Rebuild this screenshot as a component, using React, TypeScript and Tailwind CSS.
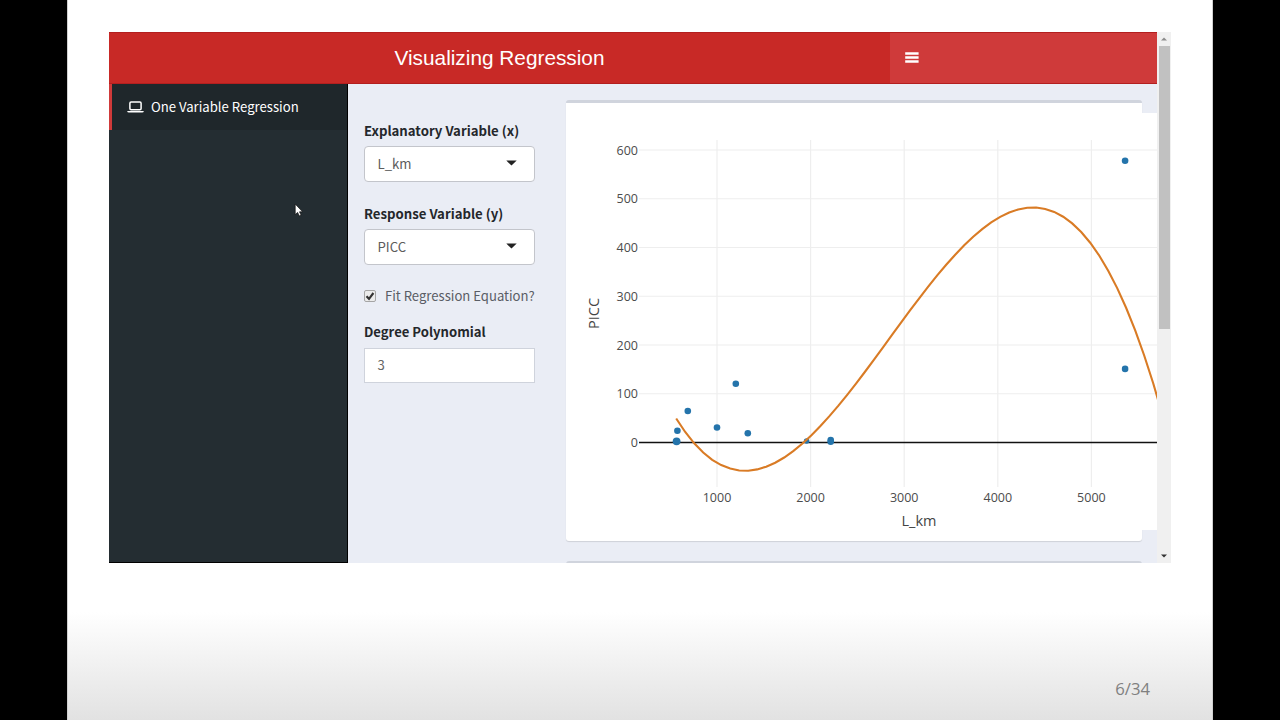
import React, { useState } from "react";

interface Point {
  x: number;
  y: number;
  r?: number;
}

const points: Point[] = [
  { x: 676.6, y: 441.3, r: 3.9 },
  { x: 677.4, y: 430.8 },
  { x: 687.8, y: 411 },
  { x: 717, y: 427.5 },
  { x: 735.8, y: 383.8 },
  { x: 747.8, y: 433.2 },
  { x: 806.6, y: 441, r: 2.8 },
  { x: 830.7, y: 440 },
  { x: 830.7, y: 441.8 },
  { x: 1125.1, y: 160.7 },
  { x: 1125.1, y: 368.9 },
];

const xTicks = [1000, 2000, 3000, 4000, 5000];
const yTicks = [0, 100, 200, 300, 400, 500, 600];

const scaleX = (v: number) => 717 + (v - 1000) * 0.0936;
const scaleY = (v: number) => 442.5 - v * 0.4875;

// degree 3 fit, between its two turning points t goes from 0 to 1
const fitPath = () => {
  const list: string[] = [];
  for (let i = 0; i <= 54; i++) {
    const x = 676.2 + i * 9;
    const t = (x - 745) / 288;
    const y = 470.8 - 263.4 * (3 * t * t - 2 * t * t * t);
    list.push(`${x.toFixed(1)},${y.toFixed(1)}`);
  }
  return "M" + list.join("L");
};

function Plot() {
  return (
    <svg
      className="block flex-none bg-white font-['Open_Sans',sans-serif]"
      width="592"
      height="417"
      viewBox="566 113 592 417"
    >
      {xTicks.map((v) => (
        <line key={v} x1={scaleX(v)} x2={scaleX(v)} y1="140" y2="487" stroke="#eeeeee" strokeWidth="1.2" />
      ))}
      {yTicks.slice(1).map((v) => (
        <line key={v} x1="639" x2="1158" y1={scaleY(v)} y2={scaleY(v)} stroke="#eeeeee" strokeWidth="1.2" />
      ))}
      <line x1="639" x2="1158" y1="442.5" y2="442.5" stroke="#111" strokeWidth="1.3" />
      {points.map((p, i) => (
        <circle key={i} cx={p.x} cy={p.y} r={p.r ?? 3.3} fill="#2474ab" />
      ))}
      <path d={fitPath()} fill="none" stroke="#d97b25" strokeWidth="2.1" />
      <g fill="#4c4c4c" fontSize="12.5">
        {xTicks.map((v) => (
          <text key={v} x={scaleX(v)} y="502" textAnchor="middle">
            {v}
          </text>
        ))}
        {yTicks.map((v) => (
          <text key={v} x="638" y={scaleY(v) + 4.5} textAnchor="end">
            {v}
          </text>
        ))}
      </g>
      <g fill="#444" fontSize="14.5" textAnchor="middle">
        <text x="919" y="526">L_km</text>
        <text transform="translate(599 313.5) rotate(-90)">PICC</text>
      </g>
    </svg>
  );
}

function SelectBox({ label, value }: { label: string; value: string }) {
  return (
    <div>
      <div className="h-[22px] text-[13.2px] leading-[22px] font-bold text-[#24272b]">{label}</div>
      <div className="mt-1 flex h-9 items-center justify-between rounded-[4px] border border-[#c3c5cb] bg-white pr-[17px] pl-[12.5px] text-[13.2px] text-[#5c5c5c]">
        <span>{value}</span>
        <svg width="11" height="6" viewBox="0 0 11 6" className="-mt-0.5">
          <path d="M0.3 0.5H10.7L5.5 5.6Z" fill="#222" />
        </svg>
      </div>
    </div>
  );
}

function Header() {
  return (
    <div className="flex h-[52px] flex-none border-y border-[#b31f1f] bg-[#c82926] text-white">
      <div className="w-[781px] text-center font-['Liberation_Sans',sans-serif] text-[20.8px] leading-[50px]">
        Visualizing Regression
      </div>
      <div className="flex flex-1 items-center bg-[#cf3a3a] pl-[15px]">
        <svg width="14" height="12" viewBox="0 0 14 12" className="-mt-px">
          <path d="M0.2 1.5H13.6M0.2 5.5H13.6M0.2 9.5H13.6" stroke="#fff" strokeWidth="2.6" />
        </svg>
      </div>
    </div>
  );
}

function Sidebar() {
  return (
    <div className="w-[239px] flex-none border-r border-b border-black bg-[#242d32]">
      <div className="flex h-[46px] items-center border-l-[3px] border-[#cf3a3a] bg-[#1f272b] pl-[15px] text-[13.15px] text-white">
        <svg width="17" height="12" viewBox="0 0 17 12" className="mr-[7px] -mt-px">
          <rect x="2.9" y="1" width="11.2" height="7.7" rx="1.2" fill="none" stroke="#fff" strokeWidth="1.5" />
          <path d="M0.3 10H16.7V10.5Q16.7 11.6 15.2 11.6H1.8Q0.3 11.6 0.3 10.5Z" fill="#fff" />
        </svg>
        One Variable Regression
      </div>
    </div>
  );
}

function Scrollbar() {
  return (
    <div className="flex w-[14px] flex-none flex-col items-center bg-[#f0f0f0]">
      <div className="flex h-[14px] items-center">
        <svg width="6" height="4" viewBox="0 0 6 4">
          <path d="M0 3.5H6L3 0.5Z" fill="#8b8b8b" />
        </svg>
      </div>
      <div className="h-[283px] w-[11px] bg-[#c1c1c1]" />
      <div className="mt-auto flex h-[15px] items-center">
        <svg width="6" height="4" viewBox="0 0 6 4">
          <path d="M0 0.5H6L3 3.5Z" fill="#333" />
        </svg>
      </div>
    </div>
  );
}

function App() {
  const [fit, setFit] = useState(true);

  return (
    <div className="h-[720px] w-[1280px] overflow-hidden bg-black px-[67px]">
      <div className="relative h-full w-[1146px] border-x border-[#d0d0d0] bg-linear-to-b from-white from-85% to-[#e2e2e2] pt-8 pl-[41px]">
        <div className="flex h-[531px] w-[1062px] overflow-hidden font-['Noto_Sans_CJK_SC',sans-serif]">
          <div className="flex w-[1048px] flex-none flex-col overflow-hidden">
            <Header />
            <div className="flex min-h-0 flex-1">
              <Sidebar />
              <div className="flex min-w-0 flex-1 overflow-hidden bg-[#eaedf5] pl-4">
                <div className="w-[170.5px] flex-none pt-9">
                  <SelectBox label="Explanatory Variable (x)" value="L_km" />
                  <div className="h-[20.5px]" />
                  <SelectBox label="Response Variable (y)" value="PICC" />
                  <div
                    className="mt-5 flex h-[22px] items-center text-[13.1px] whitespace-nowrap text-[#5a5d65]"
                    onClick={() => setFit(!fit)}
                  >
                    <span className="mr-[9px] flex size-3 flex-none items-center justify-center rounded-[2px] border border-[#a5a5a5] bg-[#ececec]">
                      {fit && (
                        <svg width="10" height="10" viewBox="0 0 10 10">
                          <path d="M1.5 5.2L4 7.8L8.4 2" fill="none" stroke="#333" strokeWidth="2.1" />
                        </svg>
                      )}
                    </span>
                    Fit Regression Equation?
                  </div>
                  <div className="mt-[14.5px] h-[22px] text-[13.1px] leading-[22px] font-bold text-[#24272b]">
                    Degree Polynomial
                  </div>
                  <div className="mt-[4.5px] flex h-[35px] items-center border border-[#cfd3dc] bg-white pl-[12.5px] text-[13.2px] text-[#666]">
                    3
                  </div>
                </div>
                <div className="ml-[31.5px] w-[576px] flex-none pt-4">
                  <div className="h-[441px] rounded-[3px] border-t-[3px] border-[#d0d4dd] bg-white pt-[10px] shadow-[0_1px_1px_rgba(0,0,0,0.12)]">
                    <Plot />
                  </div>
                  <div className="mt-5 h-10 rounded-[3px] border-t-[3px] border-[#d0d4dd] bg-white" />
                </div>
              </div>
            </div>
          </div>
          <Scrollbar />
        </div>
        <div className="absolute right-[62px] bottom-[19px] font-['Open_Sans',sans-serif] text-[16.7px] leading-6 text-[#808080]">
          6/34
        </div>
        <svg className="absolute top-[203px] left-[226px]" width="10" height="14" viewBox="0 0 10 14">
          <path
            d="M1.2 1V11.6L3.6 9.4L5.3 13L7.1 12.1L5.5 8.8H8.6Z"
            fill="#fff"
            stroke="#111"
            strokeWidth="0.7"
          />
        </svg>
      </div>
    </div>
  );
}

export default App;
